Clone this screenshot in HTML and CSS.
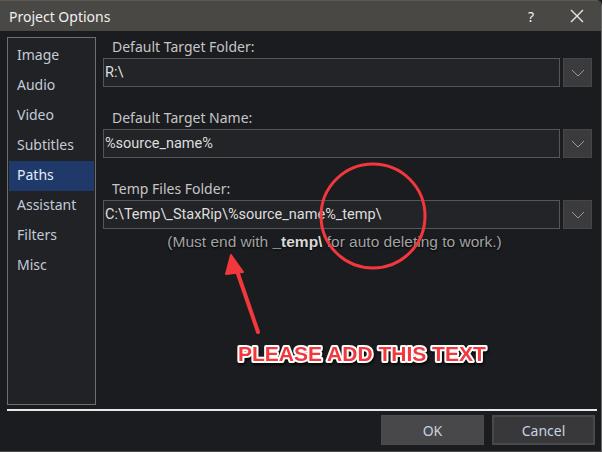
FILE: index.html
```html
<!DOCTYPE html>
<html lang="en">
<head>
  <meta charset="UTF-8" />
  <title>Project Options</title>
  <link rel="stylesheet" href="styles.css">
</head>
<body>

  <div class="window">
    <div class="titlebar">
      <span class="title">Project Options</span>
      <span class="help">?</span>
      <span class="close">
        <svg width="14" height="14" viewBox="0 0 14 14"><path d="M1 1L13 13M13 1L1 13" stroke="#e8e8e8" stroke-width="1.4"/></svg>
      </span>
    </div>

    <div class="main">
      <div class="sidebar">
        <div class="nav-item">Image</div>
        <div class="nav-item">Audio</div>
        <div class="nav-item">Video</div>
        <div class="nav-item">Subtitles</div>
        <div class="nav-item active">Paths</div>
        <div class="nav-item">Assistant</div>
        <div class="nav-item">Filters</div>
        <div class="nav-item">Misc</div>
      </div>

      <div class="content">
        <div class="field">
          <label>Default Target Folder:</label>
          <div class="combo">
            <div class="input">R:\</div>
            <div class="drop"><svg width="14" height="8" viewBox="0 0 14 8"><path d="M1 1L7 7L13 1" fill="none" stroke="#9a9a9a" stroke-width="1"/></svg></div>
          </div>
        </div>
        <div class="field">
          <label>Default Target Name:</label>
          <div class="combo">
            <div class="input">%source_name%</div>
            <div class="drop"><svg width="14" height="8" viewBox="0 0 14 8"><path d="M1 1L7 7L13 1" fill="none" stroke="#9a9a9a" stroke-width="1"/></svg></div>
          </div>
        </div>
        <div class="field">
          <label>Temp Files Folder:</label>
          <div class="combo">
            <div class="input">C:\Temp\_StaxRip\%source_name%_temp\</div>
            <div class="drop"><svg width="14" height="8" viewBox="0 0 14 8"><path d="M1 1L7 7L13 1" fill="none" stroke="#9a9a9a" stroke-width="1"/></svg></div>
          </div>
          <div class="hint">(Must end with <b>_temp\</b> for auto deleting to work.)</div>
        </div>
      </div>
    </div>

    <div class="separator"></div>

    <div class="footer">
      <button class="btn ok">OK</button>
      <button class="btn cancel">Cancel</button>
    </div>

    <svg class="markup" width="602" height="452" viewBox="0 0 602 452">
      <circle cx="373" cy="216" r="52" fill="none" stroke="#f2373d" stroke-width="3"/>
      <line x1="258" y1="332" x2="236" y2="268" stroke="#f2373d" stroke-width="4" stroke-linecap="round"/>
      <path d="M231 255L243 272L226 274Z" fill="#f2373d" stroke="#f2373d" stroke-width="2" stroke-linejoin="round"/>
      <text class="callout" x="238" y="361">PLEASE ADD THIS TEXT</text>
    </svg>
  </div>

</body>
</html>
```

FILE: styles.css
```css
body {
  margin: 0;
  background: #1c1d20;
  font-family: 'Noto Sans', sans-serif;
}
.window {
  position: relative;
  width: 602px;
  height: 452px;
  box-sizing: border-box;
  display: flex;
  flex-direction: column;
  background: #1b1c1f;
  border-right: 1px solid #6a6a6a;
  border-bottom: 1px solid #4a4a4a;
  border-top-right-radius: 6px;
  overflow: hidden;
}
.titlebar {
  height: 31px;
  flex-shrink: 0;
  background: #4a4845;
  border-top: 1px solid #5c5a57;
  box-sizing: border-box;
  display: flex;
  align-items: center;
  color: #f0f0f0;
}
.title {
  font-size: 14px;
  margin-left: 9px;
  flex: 1;
}
.help {
  font-size: 14px;
  width: 20px;
  margin-right: 22px;
}
.close {
  display: flex;
  margin-right: 17px;
}
.main {
  flex: 1;
  display: flex;
  gap: 7px;
  padding: 6px 9px 0 7px;
}
.sidebar {
  width: 85px;
  border: 1px solid #6f6f6f;
  background: #212225;
  padding: 3px 1px 0 1px;
  height: 363px;
}
.nav-item {
  height: 30px;
  line-height: 28px;
  padding-left: 8px;
  font-size: 14px;
  color: #c4cbd8;
}
.nav-item.active {
  background: #1f3a6a;
  color: #e6ecf6;
}
.content {
  flex: 1;
  display: flex;
  flex-direction: column;
  gap: 21px;
}
.field label {
  display: block;
  height: 20px;
  line-height: 20px;
  margin-left: 9px;
  margin-bottom: 1px;
  font-size: 14px;
  color: #c6c6c6;
}
.combo {
  display: flex;
  gap: 3px;
  height: 29px;
}
.input {
  flex: 1;
  border: 1px solid #55565a;
  background: #232427;
  color: #dedede;
  font-family: Roboto, 'Noto Sans', sans-serif;
  font-size: 14.5px;
  line-height: 27px;
  padding-left: 1px;
}
.drop {
  width: 29px;
  background: #3b3b3e;
  border: 1px solid #46464a;
  box-sizing: border-box;
  display: flex;
  align-items: center;
  justify-content: center;
}
.hint {
  margin-top: 4px;
  text-align: center;
  padding-right: 26px;
  font-family: 'Liberation Sans', Arial, sans-serif;
  font-size: 15.5px;
  color: #a2a2a2;
  text-shadow: 0 1px 2px #000;
}
.hint b {
  color: #d8d8d8;
}
.separator {
  height: 2px;
  background: #e8e8e8;
  margin: 0 4px 0 7px;
  flex-shrink: 0;
}
.footer {
  height: 40px;
  flex-shrink: 0;
  display: flex;
  justify-content: flex-end;
  gap: 8px;
  padding: 4px 6px 0 0;
  box-sizing: border-box;
}
.btn {
  width: 103px;
  height: 30px;
  font-family: 'Noto Sans', sans-serif;
  font-size: 14px;
  color: #c8d2e2;
  border: 1px solid #4c4c4f;
  background: #48484b;
}
.btn.cancel {
  background: #38383b;
  border: 2px solid #49494c;
}
.markup {
  position: absolute;
  left: 0;
  top: 0;
  pointer-events: none;
}
.callout {
  font-family: 'Liberation Sans', Arial, sans-serif;
  font-weight: bold;
  font-size: 21px;
  fill: #f2373d;
  stroke: #ffffff;
  stroke-width: 4px;
  stroke-linejoin: round;
  paint-order: stroke;
  filter: drop-shadow(1px 2px 1px rgba(0,0,0,0.7));
}
```
